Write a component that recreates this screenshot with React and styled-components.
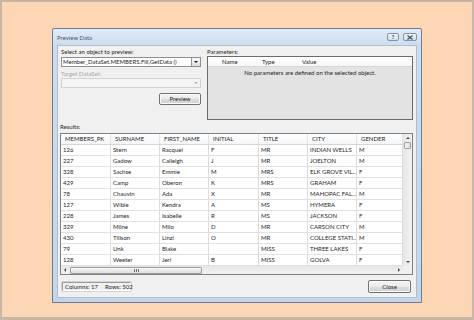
import React from "react";
import styled, { createGlobalStyle } from "styled-components";

const FS = "6px";

const GlobalStyle = createGlobalStyle`
  html, body { margin: 0; padding: 0; }
  body { font-family: "Lato", "Noto Sans", sans-serif; color: #1e1e1e; }
  * { box-sizing: border-box; }
`;

const Page = styled.div`
  width: 474px;
  height: 320px;
  background: #fdd6b6;
  border-style: solid;
  border-color: #c7b6a6;
  border-width: 2px 2px 3px 2px;
  padding: 26px 0 0 50px;
`;

const Dialog = styled.div`
  width: 370px;
  height: 275px;
  border: 1px solid #6b7d93;
  border-radius: 2px 2px 0 0;
  background: linear-gradient(#e2ebf6, #cddcee 16px, #c4d5ea);
  display: flex;
  flex-direction: column;
`;

const TitleBar = styled.div`
  height: 16px;
  display: flex;
  align-items: center;
  padding: 0 4px;
  gap: 4px;
`;

const Title = styled.span`
  flex: 1;
  font-size: ${FS};
  color: #4d5866;
`;

const CaptionButton = styled.div`
  width: ${(p) => p.$w}px;
  height: 8px;
  border: 1px solid #8193ab;
  border-radius: 2px;
  background: linear-gradient(#eef3f9, #d3deeb);
  display: flex;
  align-items: center;
  justify-content: center;
  font-size: 6px;
  line-height: 1;
  color: #3f4c5c;
  font-weight: bold;
`;

const Content = styled.div`
  flex: 1;
  margin: 0 4px 4px;
  background: #f0f0f0;
  border: 1px solid #aebdd0;
  padding: 2px 3px 0 2px;
  display: flex;
  flex-direction: column;
`;

const TopRow = styled.div`
  height: 72px;
  padding-left: 1px;
  display: grid;
  grid-template-columns: 140px 206px;
  column-gap: 6px;
`;

const Group = styled.div`
  display: flex;
  flex-direction: column;
`;

const Label = styled.div`
  font-size: ${FS};
  line-height: 8px;
  height: 8px;
  white-space: nowrap;
  color: ${(p) => (p.$disabled ? "#a8a8a8" : "#1e1e1e")};
  margin-top: ${(p) => p.$mt || 0}px;
`;

const Combo = styled.div`
  height: 10px;
  margin-top: ${(p) => p.$mt || 0}px;
  border: 1px solid ${(p) => (p.$disabled ? "#d3d3d3" : "#8f8f8f")};
  background: ${(p) => (p.$disabled ? "#f4f4f4" : "#ffffff")};
  display: flex;
  align-items: center;
  font-size: ${FS};
  line-height: 8px;
  padding-left: 1px;
  white-space: nowrap;
`;

const ComboText = styled.span`
  flex: 1;
  overflow: hidden;
`;

const ComboArrow = styled.div`
  width: 9px;
  height: 8px;
  border-left: 1px solid ${(p) => (p.$disabled ? "transparent" : "#9a9a9a")};
  background: ${(p) => (p.$disabled ? "transparent" : "linear-gradient(#f6f6f6, #e0e0e0)")};
  display: flex;
  align-items: center;
  justify-content: center;
  &::after {
    content: "";
    border-left: 2px solid transparent;
    border-right: 2px solid transparent;
    border-top: 2px solid ${(p) => (p.$disabled ? "#b5b5b5" : "#1b1b1b")};
  }
`;

const Button = styled.div`
  width: ${(p) => p.$w}px;
  height: ${(p) => p.$h}px;
  margin-top: ${(p) => p.$mt || 0}px;
  align-self: flex-end;
  border: 1px solid #707070;
  border-radius: 2px;
  background: linear-gradient(#f3f3f3 0%, #ebebeb 50%, #dddddd 51%, #cfcfcf 100%);
  box-shadow: inset 0 0 0 1px #fcfcfc;
  display: flex;
  align-items: center;
  justify-content: center;
  font-size: ${FS};
  line-height: 8px;
`;

const ParamBox = styled.div`
  height: 64px;
  border: 1px solid #6c6c6c;
  background: #e3e3e3;
  display: flex;
  flex-direction: column;
`;

const ParamHeader = styled.div`
  height: 10px;
  background: linear-gradient(#ffffff, #f5f6f8);
  border-bottom: 1px solid #d5d5d5;
  display: flex;
  align-items: center;
  padding-left: 14px;
  font-size: ${FS};
`;

const ParamCol = styled.span`
  width: 40px;
`;

const ParamMessage = styled.div`
  text-align: center;
  font-size: ${FS};
  line-height: 8px;
  margin-top: 2px;
`;

const Grid = styled.div`
  margin-top: 2px;
  height: 142px;
  border: 1px solid #7b7f86;
  background: #ffffff;
  display: grid;
  grid-template-columns: 342px 9px;
  grid-template-rows: 132px 8px;
`;

const TableArea = styled.div`
  overflow: hidden;
`;

const Row = styled.div`
  display: flex;
  height: 11px;
  border-bottom: 1px solid ${(p) => (p.$header ? "#d5d5d5" : "#e0e0e0")};
  background: ${(p) => (p.$header ? "linear-gradient(#ffffff, #f4f5f7)" : "#ffffff")};
`;

const Cell = styled.div`
  width: ${(p) => p.$w}px;
  flex: none;
  border-right: 1px solid ${(p) => (p.$header ? "#e3e4e6" : "#dcdcdc")};
  padding-left: ${(p) => (p.$header ? 4 : 2)}px;
  font-size: ${FS};
  line-height: 10px;
  white-space: nowrap;
  overflow: hidden;
  color: #1e1e1e;
`;

const VScroll = styled.div`
  background: linear-gradient(90deg, #e6e6e6, #f2f2f2);
  display: flex;
  flex-direction: column;
  align-items: center;
`;

const HScroll = styled.div`
  background: linear-gradient(#e6e6e6, #f2f2f2);
  display: flex;
  align-items: center;
`;

const ArrowBtn = styled.div`
  width: ${(p) => (p.$h ? 8 : 9)}px;
  height: 8px;
  flex: none;
  display: flex;
  align-items: center;
  justify-content: center;
  &::after {
    content: "";
    ${(p) =>
      p.$dir === "up"
        ? "border-left:2px solid transparent;border-right:2px solid transparent;border-bottom:2px solid #4a4a4a;"
        : p.$dir === "down"
        ? "border-left:2px solid transparent;border-right:2px solid transparent;border-top:2px solid #4a4a4a;"
        : p.$dir === "left"
        ? "border-top:2px solid transparent;border-bottom:2px solid transparent;border-right:2px solid #4a4a4a;"
        : "border-top:2px solid transparent;border-bottom:2px solid transparent;border-left:2px solid #4a4a4a;"}
  }
`;

const VThumb = styled.div`
  width: 7px;
  height: 7px;
  border: 1px solid #9c9c9c;
  border-radius: 1px;
  background: linear-gradient(90deg, #f7f7f7, #dcdcdc);
`;

const HThumb = styled.div`
  width: 132px;
  height: 7px;
  margin-left: 1px;
  border: 1px solid #9c9c9c;
  border-radius: 1px;
  background: linear-gradient(#f7f7f7, #dcdcdc);
  display: flex;
  align-items: center;
  justify-content: center;
  gap: 1px;
`;

const Grip = styled.span`
  width: 1px;
  height: 3px;
  background: #6f6f6f;
`;

const Spacer = styled.div`
  flex: 1;
`;

const Corner = styled.div`
  background: #f0f0f0;
`;

const Footer = styled.div`
  margin-top: 5px;
  height: 13px;
  display: flex;
  align-items: center;
  justify-content: space-between;
  padding: 0 2px 0 2px;
`;

const Status = styled.div`
  height: 9px;
  width: 69px;
  border: 1px solid #9a9a9a;
  border-right-color: #ffffff;
  border-bottom-color: #ffffff;
  box-shadow: 0 0 0 0.5px #b8b8b8;
  display: flex;
  align-items: center;
  gap: 7px;
  padding-left: 2px;
  font-size: ${FS};
  line-height: 7px;
  white-space: nowrap;
`;

const columns = [
  ["MEMBERS_PK", 50],
  ["SURNAME", 49],
  ["FIRST_NAME", 49],
  ["INITIAL", 50],
  ["TITLE", 49],
  ["CITY", 49],
  ["GENDER", 46],
];

const rows = [
  ["126", "Stern", "Racquel", "F", "MR", "INDIAN WELLS", "M"],
  ["227", "Gadow", "Caileigh", "J", "MR", "JOELTON", "M"],
  ["328", "Sachse", "Emmie", "M", "MRS", "ELK GROVE VIL…", "F"],
  ["429", "Camp", "Oberon", "K", "MRS", "GRAHAM", "F"],
  ["78", "Chauvin", "Ada", "X", "MR", "MAHOPAC FAL…", "M"],
  ["127", "Wible", "Kendra", "A", "MS", "HYMERA", "F"],
  ["228", "James", "Isabelle", "R", "MS", "JACKSON", "F"],
  ["329", "Milne", "Milo", "D", "MR", "CARSON CITY", "M"],
  ["430", "Tillson", "Linzi", "O", "MR", "COLLEGE STATI…", "M"],
  ["79", "Unk", "Blake", "", "MISS", "THREE LAKES", "F"],
  ["128", "Weeter", "Jeri", "B", "MISS", "GOLVA", "F"],
  ["", "", "", "", "", "", ""],
];

export default function App() {
  return (
    <>
      <GlobalStyle />
      <Page>
        <Dialog>
          <TitleBar>
            <Title>Preview Data</Title>
            <CaptionButton $w={12}>?</CaptionButton>
            <CaptionButton $w={14}>
              <svg width="6" height="5" viewBox="0 0 6 5">
                <path d="M0.5 0.5 L5.5 4.5 M5.5 0.5 L0.5 4.5" stroke="#3f4c5c" strokeWidth="1.1" />
              </svg>
            </CaptionButton>
          </TitleBar>
          <Content>
            <TopRow>
              <Group>
                <Label>Select an object to preview:</Label>
                <Combo $mt={1}>
                  <ComboText>Member_DataSet.MEMBERS.Fill,GetData ()</ComboText>
                  <ComboArrow />
                </Combo>
                <Label $disabled $mt={3}>Target DataSet:</Label>
                <Combo $disabled>
                  <ComboText />
                  <ComboArrow $disabled />
                </Combo>
                <Button $w={42} $h={12} $mt={5}>Preview</Button>
              </Group>
              <Group>
                <Label>Parameters:</Label>
                <ParamBox>
                  <ParamHeader>
                    <ParamCol>Name</ParamCol>
                    <ParamCol>Type</ParamCol>
                    <ParamCol>Value</ParamCol>
                  </ParamHeader>
                  <ParamMessage>No parameters are defined on the selected object.</ParamMessage>
                </ParamBox>
              </Group>
            </TopRow>
            <Label $mt={3}>Results:</Label>
            <Grid>
              <TableArea>
                <Row $header>
                  {columns.map(([name, w]) => (
                    <Cell key={name} $w={w} $header>
                      {name}
                    </Cell>
                  ))}
                </Row>
                {rows.map((r, i) => (
                  <Row key={i}>
                    {r.map((v, j) => (
                      <Cell key={j} $w={columns[j][1]}>
                        {v}
                      </Cell>
                    ))}
                  </Row>
                ))}
              </TableArea>
              <VScroll>
                <ArrowBtn $dir="up" />
                <VThumb />
                <Spacer />
                <ArrowBtn $dir="down" />
              </VScroll>
              <HScroll>
                <ArrowBtn $h $dir="left" />
                <HThumb>
                  <Grip />
                  <Grip />
                  <Grip />
                </HThumb>
                <Spacer />
                <ArrowBtn $h $dir="right" />
              </HScroll>
              <Corner />
            </Grid>
            <Footer>
              <Status>
                <span>Columns: 17</span>
                <span>Rows: 502</span>
              </Status>
              <Button $w={43} $h={13}>Close</Button>
            </Footer>
          </Content>
        </Dialog>
      </Page>
    </>
  );
}
